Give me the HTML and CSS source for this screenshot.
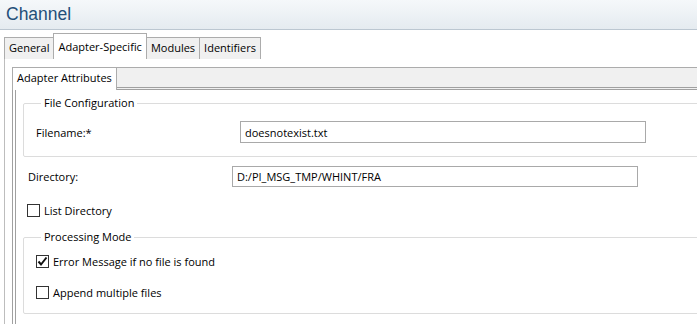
FILE: index.html
```html
<!DOCTYPE html>
<html lang="en">
<head>
    <meta charset="UTF-8">
    <title>Channel</title>
    <link rel="stylesheet" href="styles.css">
</head>
<body>
    <header class="title-bar">
        <h1>Channel</h1>
    </header>

    <div class="folder">
        <ul class="tabs">
            <li class="tab">General</li>
            <li class="tab active">Adapter-Specific</li>
            <li class="tab">Modules</li>
            <li class="tab">Identifiers</li>
        </ul>

        <div class="folder-body">
            <div class="subfolder">
                <div class="subtabs">
                    <div class="subtab active">Adapter Attributes</div>
                    <div class="subtab-fill"></div>
                </div>

                <div class="subfolder-body">
                    <fieldset class="group">
                        <legend>File Configuration</legend>
                        <div class="field-row">
                            <label for="filename">Filename:*</label>
                            <input type="text" id="filename" value="doesnotexist.txt">
                        </div>
                    </fieldset>

                    <div class="field-row outer">
                        <label for="directory">Directory:</label>
                        <input type="text" id="directory" class="short" value="D:/PI_MSG_TMP/WHINT/FRA">
                    </div>

                    <div class="check outer">
                        <span class="box"></span>
                        <span>List Directory</span>
                    </div>

                    <fieldset class="group mode">
                        <legend>Processing Mode</legend>
                        <div class="check">
                            <span class="box">
                                <svg width="11" height="11" viewBox="0 0 11 11"><path d="M1.5 5.5 L4 8.5 L9.5 1.5" fill="none" stroke="#111" stroke-width="2"/></svg>
                            </span>
                            <span>Error Message if no file is found</span>
                        </div>
                        <div class="check">
                            <span class="box"></span>
                            <span>Append multiple files</span>
                        </div>
                    </fieldset>
                </div>
            </div>
        </div>
    </div>
</body>
</html>
```

FILE: styles.css
```css
/* Channel editor, adapter-specific tab */
body {
    margin: 0;
    width: 697px;
    height: 324px;
    overflow: hidden;
    background-color: #fff;
    font-family: "Open Sans", "Noto Sans", sans-serif;
    font-size: 11px;
    color: #000;
}

.title-bar {
    height: 29px;
    border-bottom: 1px solid #bcc7d1;
    background: linear-gradient(#f5f8fa, #e5ebf0);
}

.title-bar h1 {
    margin: 0;
    padding: 4px 0 0 6px;
    font-family: "Liberation Sans", Arial, sans-serif;
    font-size: 17.5px;
    font-weight: normal;
    color: #234f79;
}

/* outer tab folder */
.tabs {
    display: flex;
    align-items: flex-end;
    height: 25px;
    margin: 4px 0 0 5px;
    padding: 0;
    list-style: none;
}

.tab {
    height: 21px;
    line-height: 20px;
    padding: 0 4px;
    margin-left: -1px;
    border: 1px solid #acacac;
    border-bottom: none;
    background-color: #f0f0f0;
}

.tab.active {
    height: 25px;
    line-height: 26px;
    background-color: #fff;
}

.folder-body {
    width: 740px;
    margin-left: 4px;
    padding: 8px 0 0 7px;
    border-left: 1px solid #bdbdbd;
    height: 260px;
}

/* inner tab folder */
.subtabs {
    display: flex;
    height: 23px;
}

.subtab {
    padding: 0 4px;
    line-height: 20px;
    border: 1px solid #acacac;
    border-bottom: none;
    background-color: #fff;
}

.subtab-fill {
    flex: 1;
    background-color: #f0f0f0;
    border-top: 1px solid #acacac;
    border-bottom: 3px double #a0a0a0;
}

.subfolder-body {
    height: 240px;
    padding: 5px 0 0 7px;
    border-left: 4px double #a0a0a0;
}

/* group boxes */
.group {
    margin: 0;
    padding: 10px 0 13px 12px;
    border: 1px solid #dcdcdc;
    border-radius: 2px;
}

.group legend {
    margin-left: 5px;
    padding: 0 3px;
    line-height: 16px;
}

.group.mode {
    padding: 6px 0 13px 12px;
    margin-top: 11px;
}

.field-row {
    display: grid;
    grid-template-columns: 204px 406px;
    align-items: center;
}

.field-row.outer {
    padding: 9px 0 0 5px;
}

input {
    box-sizing: border-box;
    height: 22px;
    padding: 0 4px;
    border: 1px solid #a9a9a9;
    font-family: inherit;
    font-size: inherit;
    color: #000;
}

input.short {
    height: 21px;
}

.check {
    display: flex;
    align-items: center;
    gap: 4px;
    height: 16px;
    margin-top: 15px;
}

.check.outer {
    margin: 15px 0 0 4px;
}

.group .check:first-of-type {
    margin-top: 2px;
}

.box {
    box-sizing: border-box;
    width: 13px;
    height: 13px;
    border: 1px solid #333;
    background-color: #fff;
    display: flex;
    align-items: center;
    justify-content: center;
}
```
